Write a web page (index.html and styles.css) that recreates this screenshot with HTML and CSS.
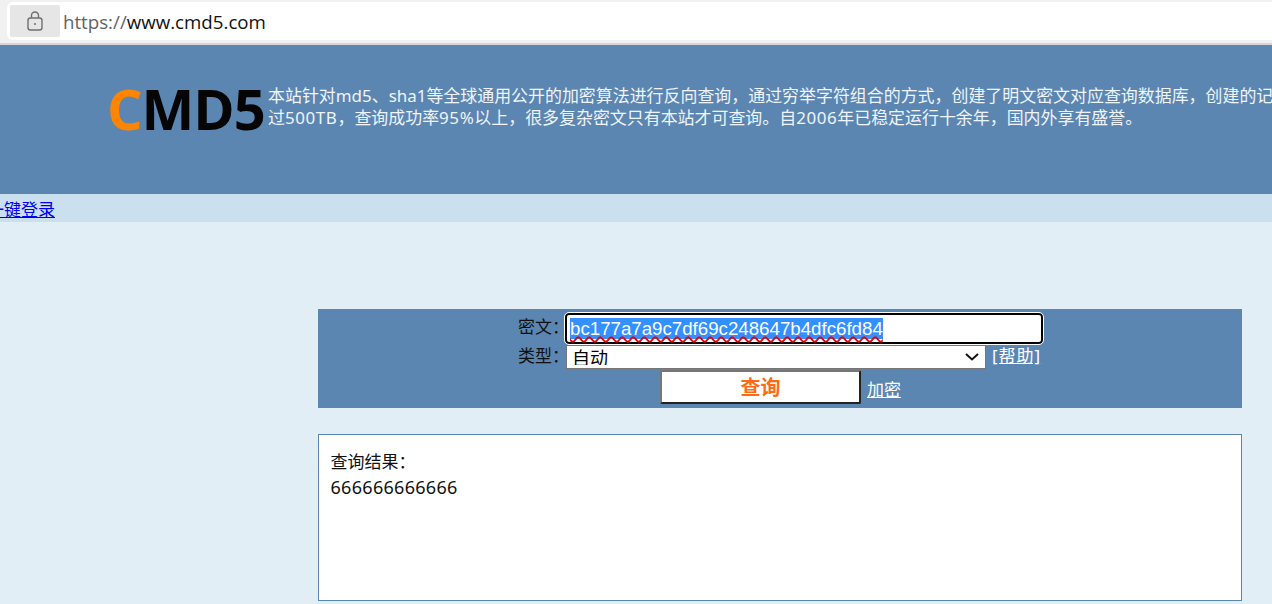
FILE: index.html
```html
<!DOCTYPE html>
<html lang="zh-CN">
<head>
<meta charset="utf-8">
<title>cmd5</title>
<link rel="stylesheet" href="styles.css">
</head>
<body>
<div class="browser-bar">
  <div class="address">
    <span class="lock-chip">
      <svg width="18" height="20" viewBox="0 0 18 20" fill="none" stroke="#6f6f6f" stroke-width="1.4"><rect x="2" y="7" width="14" height="12" rx="2.5"/><path d="M5.5 7V4.5a3.5 3.5 0 0 1 7 0V7"/><circle cx="9" cy="13" r="1" fill="#6f6f6f" stroke="none"/></svg>
    </span>
    <span class="url"><span class="scheme">https://</span>www.cmd5.com</span>
  </div>
</div>
<header class="banner">
  <div class="logo"><span class="logo-c">C</span>MD5</div>
  <p class="intro">本站针对md5、sha1等全球通用公开的加密算法进行反向查询，通过穷举字符组合的方式，创建了明文密文对应查询数据库，创建的记录约90万亿条，占用硬盘超<br>过<span class="num">500TB</span>，查询成功率<span class="num">95%</span>以上，很多复杂密文只有本站才可查询。自<span class="num">2006</span>年已稳定运行十余年，国内外享有盛誉。</p>
</header>
<nav class="subbar"><a href="#" class="login">一键登录</a></nav>
<main class="content">
  <form class="panel">
    <div class="row row-cipher">
      <label class="label">密文：</label>
      <div class="cipher"><span class="selected">bc177a7a9c7df69c248647b4dfc6fd84</span></div>
    </div>
    <div class="row row-type">
      <label class="label">类型：</label>
      <select class="type"><option>自动</option></select>
      <a href="#" class="help">[帮助]</a>
    </div>
    <div class="row row-submit">
      <button type="button" class="query">查询</button>
      <a href="#" class="encrypt">加密</a>
    </div>
  </form>
  <section class="result">
    <div>查询结果：</div>
    <div class="digits">666666666666</div>
  </section>
</main>
</body>
</html>
```
FILE: styles.css
```css
* { box-sizing: border-box; }
html, body { margin: 0; height: 604px; overflow: hidden; }
body {
  background: #e1eef6;
  font-family: "Noto Sans", "Noto Sans CJK SC", sans-serif;
  font-size: 17px;
  color: #000;
  width: 1272px;
}
.browser-bar {
  height: 45px;
  background: #f1f1f1;
  padding: 2px 0 5px 7px;
  border-bottom: 2px solid #d6d6d6;
}
.address {
  height: 38px;
  background: #fff;
  border-radius: 6px 0 0 6px;
  display: flex;
  align-items: center;
  padding-left: 3px;
}
.lock-chip {
  width: 50px;
  height: 32px;
  background: #e6e6e6;
  border-radius: 2px;
  display: flex;
  align-items: center;
  justify-content: center;
}
.url {
  margin-left: 3px;
  font-family: "Open Sans", sans-serif;
  font-size: 18.7px;
  color: #111;
}
.scheme { color: #5f6368; }
.banner {
  height: 149px;
  background: #5c86b2;
  display: flex;
  align-items: flex-start;
  padding: 29px 0 0 107px;
  overflow: hidden;
}
.logo {
  flex: none;
  width: 161px;
  font-family: "Open Sans", sans-serif;
  font-weight: 700;
  font-size: 56px;
  line-height: 68px;
  color: #050505;
  letter-spacing: -1.1px;
}
.logo-c { color: #ff8500; }
.intro {
  flex: none;
  margin: 11px 0 0;
  width: 1200px;
  font-size: 16.95px;
  line-height: 22px;
  color: #eef4f8;
  white-space: nowrap;
}
.num { letter-spacing: 0.6px; }
.subbar {
  height: 28px;
  background: #cbe0ef;
  line-height: 32px;
  overflow: hidden;
}
.login {
  display: inline-block;
  margin-left: -13px;
  color: #0000ee;
}
.content {
  padding: 87px 30px 0 318px;
}
.panel {
  height: 99px;
  background: #5c86b2;
  padding-top: 4px;
  display: flex;
  flex-direction: column;
  align-items: stretch;
}
.row {
  display: flex;
  align-items: center;
  padding-left: 200px;
}
.label {
  width: 47px;
  font-size: 17px;
  line-height: 20px;
  color: #111;
  white-space: nowrap;
  margin-bottom: 3px;
}
.row-type .label { margin-bottom: 2px; }
.cipher {
  width: 478px;
  height: 31px;
  background: #fff;
  border: 2px solid #000;
  border-radius: 4px;
  outline: 1px solid #fff;
  padding-left: 3px;
  display: flex;
  align-items: center;
  font-family: "Liberation Sans", sans-serif;
  font-size: 18.7px;
}
.selected {
  background: #3390ff;
  color: #fff;
  text-decoration: underline wavy #f00000 1.5px;
  text-underline-offset: 1px;
  line-height: 21px;
}
.row-type { margin-top: 1px; height: 24px; }
.type {
  appearance: none;
  width: 420px;
  height: 24px;
  margin-left: 1px;
  font-family: "Noto Sans CJK SC", sans-serif;
  font-size: 18px;
  line-height: 22px;
  color: #000;
  background: #fff url("data:image/svg+xml,%3Csvg xmlns='http://www.w3.org/2000/svg' width='14' height='8' viewBox='0 0 14 8'%3E%3Cpath d='M1 1l6 5.5L13 1' fill='none' stroke='%23111' stroke-width='2'/%3E%3C/svg%3E") no-repeat right 6px center;
  border: 1px solid #767676;
  border-radius: 0;
  padding: 0 0 3px 5px;
}
.help {
  margin-left: 6px;
  color: #fff;
  font-size: 17px;
  letter-spacing: 1px;
  line-height: 20px;
  white-space: nowrap;
  margin-bottom: 2px;
}
.row-submit { margin-top: 1px; padding-left: 342px; }
.query {
  width: 201px;
  height: 34px;
  background: #fff;
  border-style: solid;
  border-width: 2px;
  border-color: #767676 #222 #222 #767676;
  border-radius: 2px;
  color: #ff6a13;
  font-family: "Noto Sans CJK SC", sans-serif;
  font-weight: 700;
  font-size: 20px;
  line-height: 26px;
  padding: 0 0 1px;
}
.encrypt {
  margin: 2px 0 0 6px;
  color: #fff;
  font-size: 17px;
}
.result {
  height: 167px;
  margin-top: 26px;
  background: #fff;
  border: 1px solid #5c86b2;
  padding: 14px 11.5px;
  line-height: 26px;
  font-size: 17px;
  color: #111;
}
.digits { font-size: 18px; letter-spacing: 0.3px; line-height: 24px; }
```
